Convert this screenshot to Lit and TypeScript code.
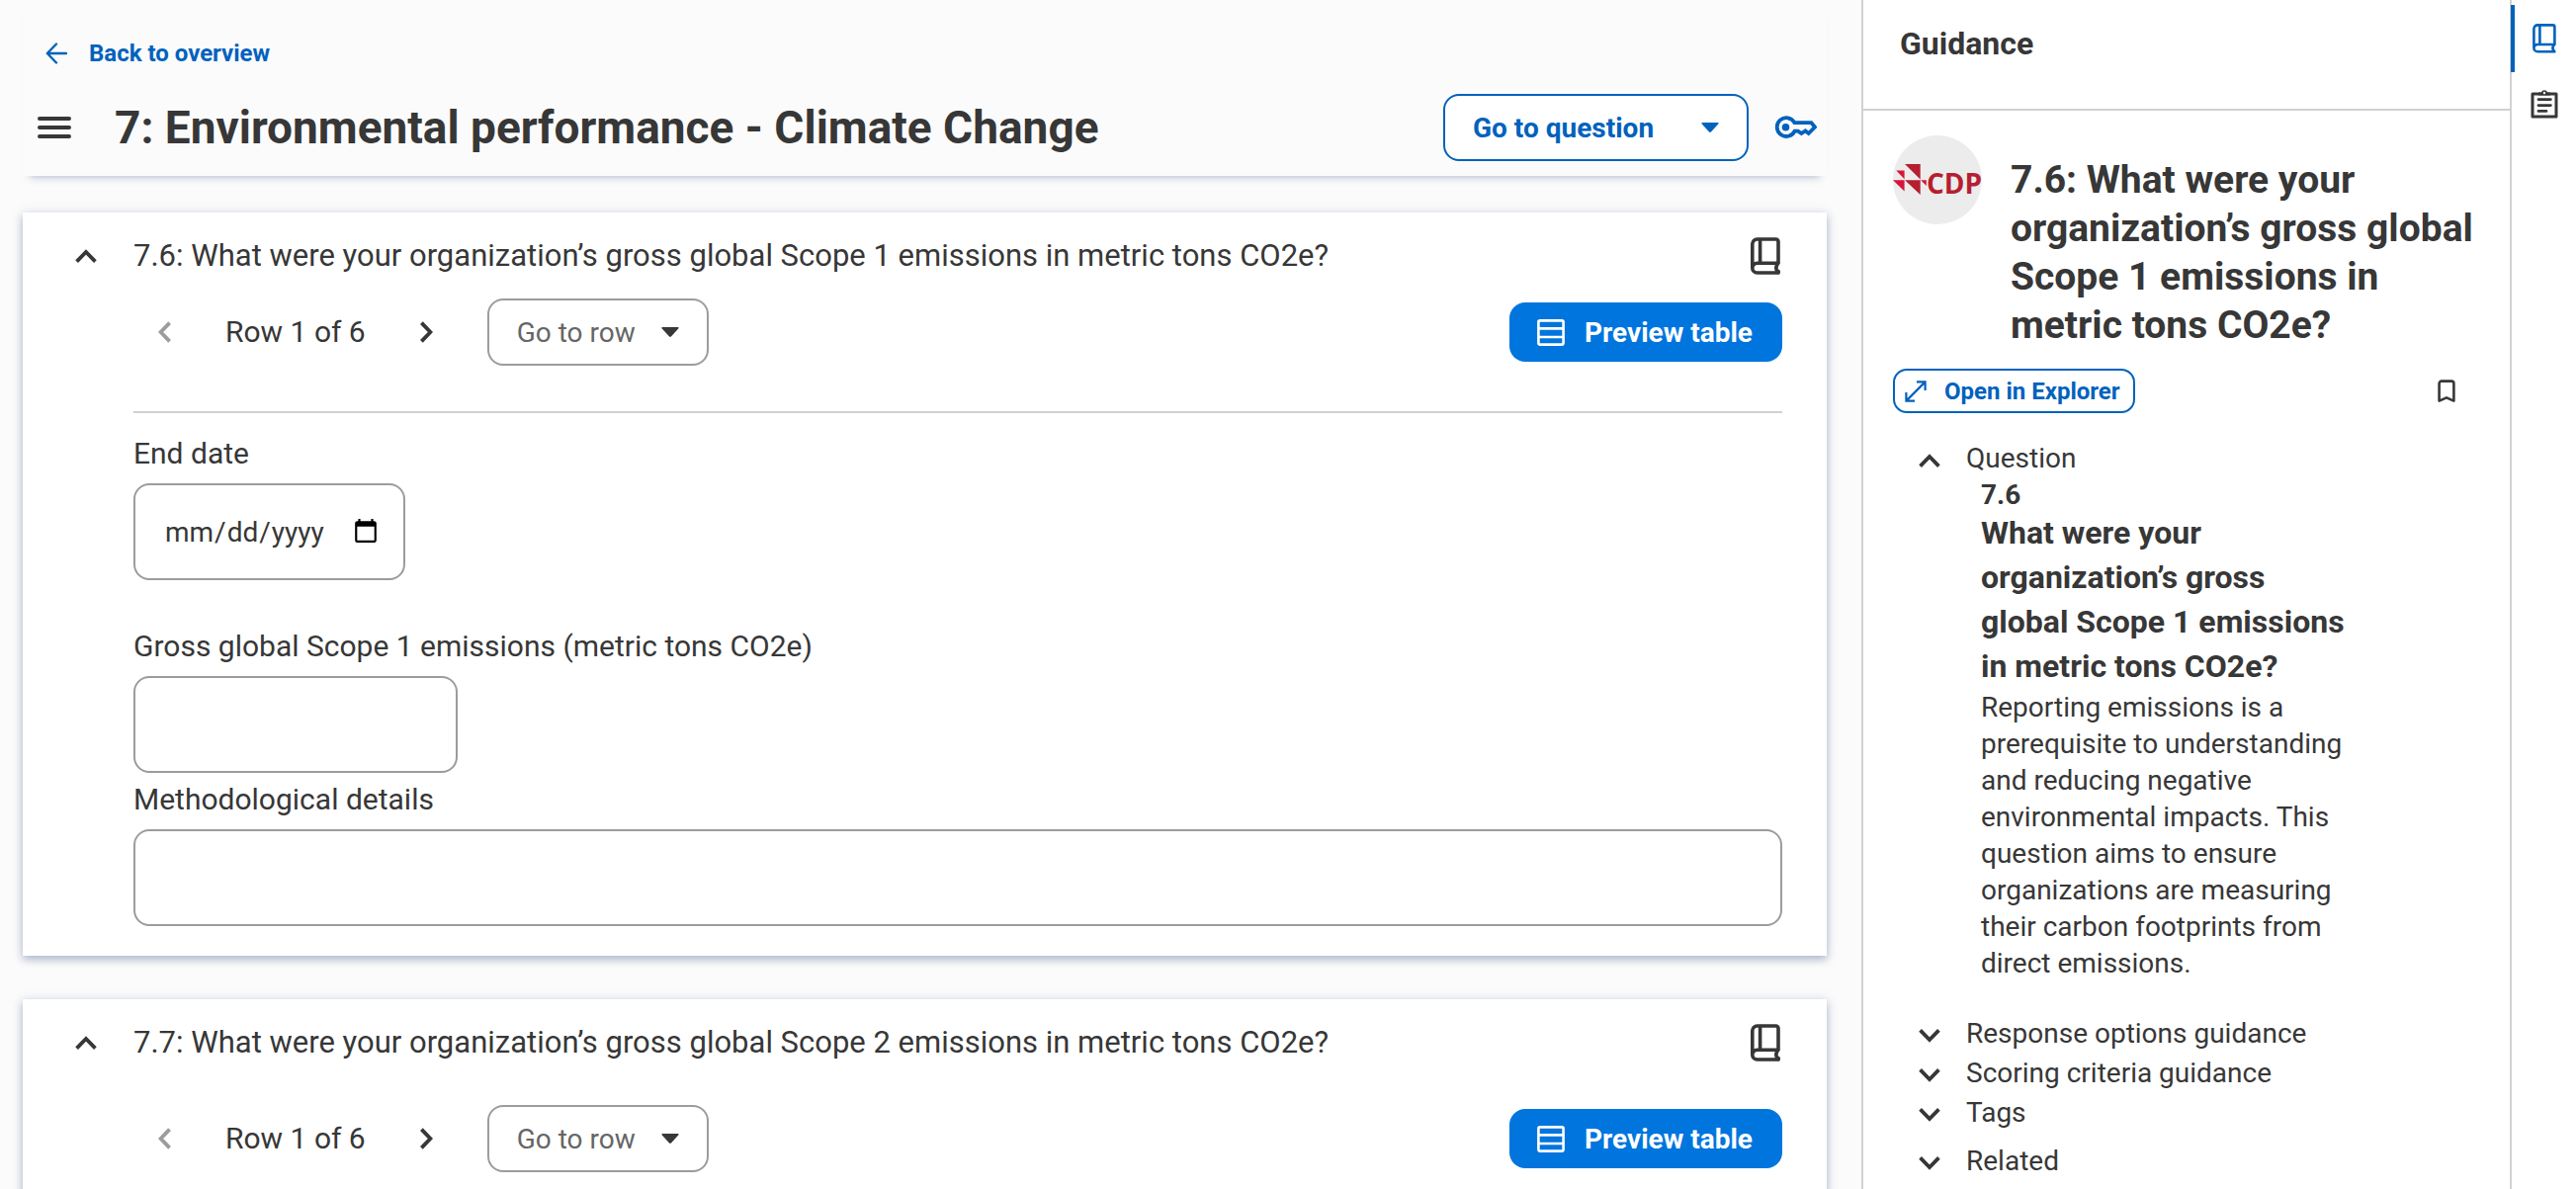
import { LitElement, html, css, svg, nothing, type TemplateResult } from "lit";
import { customElement, property } from "lit/decorators.js";

const icon = (width: number, height: number, body: TemplateResult) => html`
  <svg class="icon" width=${width} height=${height} viewBox="0 0 ${width} ${height}" aria-hidden="true"
    fill="none" stroke="currentColor" stroke-width="3" stroke-linecap="round" stroke-linejoin="round">${body}</svg>`;

const arrowLeft = () => icon(22, 22, svg`<path stroke-width="2.4" d="M21 11H2M11 1.5L1.8 11L11 20.5" />`);
const menu = () => icon(34, 24, svg`<path stroke-width="4" d="M2 3H32M2 12H32M2 21H32" />`);
const caretDown = () => icon(18, 10, svg`<path stroke="none" fill="currentColor" d="M1.5 0H16.5Q18.4 0 17.2 1.5L10.2 9.2Q9 10.4 7.8 9.2L0.8 1.5Q-.4 0 1.5 0Z" />`);
const chevronUp = () => icon(22, 14, svg`<path stroke-width="3.8" stroke-linecap="butt" stroke-linejoin="miter" d="M1.6 12.6L11 3L20.4 12.6" />`);
const chevronDown = () => icon(22, 14, svg`<path stroke-width="3.8" stroke-linecap="butt" stroke-linejoin="miter" d="M1.6 1.4L11 11L20.4 1.4" />`);
const chevronLeft = () => icon(13, 22, svg`<path stroke-width="3.8" stroke-linecap="butt" stroke-linejoin="miter" d="M11.6 1.6L2.6 11L11.6 20.4" />`);
const chevronRight = () => icon(13, 22, svg`<path stroke-width="3.8" stroke-linecap="butt" stroke-linejoin="miter" d="M1.4 1.6L10.4 11L1.4 20.4" />`);
const key = () => icon(43, 24, svg`
  <path stroke-width="3.8" stroke-linejoin="miter" stroke-linecap="butt"
    d="M20.4 7.2H37.4L41 11.6L34.6 18L31.4 15.4L27.4 18L24 15.6H20.6A9.4 9.4 0 1 1 20.4 7.2Z" />
  <circle cx="11.5" cy="11.8" r="3.8" fill="currentColor" stroke="none" />`);
const book = () => icon(30, 38, svg`
  <path stroke-width="3.6" d="M28.2 34.5V36H6.6A4.8 4.8 0 0 1 1.8 31.2V6.8A4.8 4.8 0 0 1 6.6 2H25.6A2.4 2.4 0 0 1 28 4.4V26.2H6.6A4.8 4.8 0 0 0 1.8 31M9.6 2V26M28 26.2Q23.6 31 28 36" />`);
const bookSmall = () => icon(24, 30, svg`
  <path stroke-width="2.6" d="M22.4 28.2H5.2A3.8 3.8 0 0 1 1.4 24.4V5.2A3.8 3.8 0 0 1 5.2 1.4H20.4A2 2 0 0 1 22.4 3.4V21H5.2A3.6 3.6 0 0 0 1.4 24.4M7.4 1.4V21M22.2 21Q18.6 24.6 22.2 28.2" />`);
const clipboard = () => icon(28, 30, svg`
  <path stroke-width="3" d="M2 5H26V28H2Z" />
  <path stroke-width="2.8" d="M8 10.6H20.4M8 16.6H20.4M8 22.4H16" />
  <path stroke="none" fill="currentColor" d="M8 6.4V3.6H10.8A3.4 3.4 0 0 1 17.2 3.6H20V6.4Z" />
  <circle cx="14" cy="4" r="1.2" fill="#fff" stroke="none" />`);
const table = () => icon(28, 27, svg`
  <rect x="1.4" y="1.4" width="25.2" height="24.2" rx="1.5" stroke-width="2.6" />
  <path stroke-width="2.6" stroke-linecap="butt" d="M1.4 9.4H26.6M1.4 18H26.6" />`);
const expand = () => icon(22, 22, svg`<path stroke-width="2.2" stroke-linecap="butt" stroke-linejoin="miter" d="M12 1.4H20.6V10M20.6 1.4L1.4 20.6M1.4 12V20.6H10" />`);
const bookmark = () => icon(18, 24, svg`<path stroke-width="2.6" d="M1.6 4A2.4 2.4 0 0 1 4 1.6H14A2.4 2.4 0 0 1 16.4 4V21.6L9 18.4L1.6 21.6Z" />`);

const base = css`
  :host {
    --ink: #373737;
    --link: #0062bd;
    --line: #d1d1d1;
    --field: #9c9c9c;
    box-sizing: border-box;
    color: var(--ink);
    font-family: Roboto, "Liberation Sans", sans-serif;
  }
  *, *::before, *::after { box-sizing: border-box; }
  h1, h2, h3, h4, p { margin: 0; }
  button, input, select { margin: 0; font: inherit; color: inherit; }
  button { padding: 0; border: 0; background: none; cursor: pointer; }
  .icon { display: block; flex: none; }
  .picker { display: inline-grid; align-items: center; }
  .picker select { grid-area: 1 / 1; appearance: none; height: 68px; border-radius: 16px; background: #fff; }
  .picker .icon { grid-area: 1 / 1; justify-self: end; pointer-events: none; }
`;

@customElement("question-card")
class QuestionCard extends LitElement {
  @property() heading = "";
  @property({ type: Boolean, reflect: true }) roomy = false;
  @property({ type: Boolean }) fields = false;

  static styles = [base, css`
    :host {
      display: block;
      flex: none;
      padding: 24px 45px 30px 53px;
      background: #fff;
      box-shadow: 0 4px 8px rgba(44, 72, 124, 0.32), 0 0 12px rgba(44, 72, 124, 0.12);
    }
    .head { display: flex; align-items: center; min-height: 40px; padding-right: 2px; }
    .title { flex: 1; padding-left: 37px; font-size: 31px; line-height: 40px; font-weight: 400; }
    .body { padding-left: 59px; }
    .row { display: flex; align-items: center; gap: 55px; margin-top: 23px; padding-left: 25px; }
    :host([roomy]) .row { margin-top: 43px; }
    .count { font-size: 30px; line-height: 42px; }
    .prev { color: #9c9c9c; }
    .picker select { width: 224px; padding: 0 28px; border: 2px solid var(--field); color: #666; font-size: 28px; }
    .picker .icon { margin-right: 30px; }
    .preview {
      display: flex; align-items: center; gap: 20px; height: 60px; margin-left: auto; padding: 0 30px 0 28px;
      border-radius: 16px; background: #0075de; color: #fff; font-size: 28px; font-weight: 700;
    }
    .rule { height: 2px; margin: 46px 0 20px; border: 0; background: var(--line); }
    .label { display: block; margin-bottom: 9px; font-size: 30px; line-height: 42px; }
    .field {
      display: block; height: 98px; padding: 0 22px 0 29px; border: 2px solid var(--field); border-radius: 16px;
      background: #fff; font-size: 28px;
    }
    .date { width: 275px; margin-bottom: 46px; }
    .number { width: 328px; margin-bottom: 6px; }
    .wide { width: 100%; }
  `];

  render() {
    return html`
      <div class="head">
        <button aria-label="Collapse question">${chevronUp()}</button>
        <h2 class="title">${this.heading}</h2>
        <button aria-label="Show guidance">${book()}</button>
      </div>
      <div class="body">
        <div class="row">
          <button class="prev" aria-label="Previous row" disabled>${chevronLeft()}</button>
          <span class="count">Row 1 of 6</span>
          <button aria-label="Next row">${chevronRight()}</button>
          <span class="picker">
            <select aria-label="Go to row"><option>Go to row</option></select>
            ${caretDown()}
          </span>
          <button class="preview">${table()}Preview table</button>
        </div>
        ${this.fields ? html`
          <hr class="rule" />
          <label class="label" for="end-date">End date</label>
          <input class="field date" id="end-date" type="date" />
          <label class="label" for="gross">Gross global Scope 1 emissions (metric tons CO2e)</label>
          <input class="field number" id="gross" type="text" inputmode="decimal" />
          <label class="label" for="details">Methodological details</label>
          <input class="field wide" id="details" type="text" />` : nothing}
      </div>`;
  }
}

@customElement("guidance-panel")
class GuidancePanel extends LitElement {
  static styles = [base, css`
    :host { display: block; border-left: 2px solid var(--line); background: #fff; overflow: hidden; }
    .top { padding: 22px 37px 44px; border-bottom: 2px solid var(--line); }
    .name { font-size: 32px; line-height: 44px; }
    .content { padding: 25px 34px 25px 30px; }
    .intro { display: flex; gap: 29px; }
    .logo { flex: none; border-radius: 50%; background: #ececec; }
    .mark { font-family: "Open Sans", "Noto Sans", sans-serif; font-size: 28px; font-weight: 700; }
    .question { margin-top: 21px; font-size: 39px; line-height: 49px; }
    .actions { display: flex; align-items: center; justify-content: space-between; margin-top: 19px; padding-right: 21px; }
    .open {
      display: flex; align-items: center; gap: 18px; height: 45px; padding: 0 13px 0 10px;
      border: 2px solid var(--link); border-radius: 14px; color: var(--link); font-size: 24px; font-weight: 700;
    }
    .sections { display: flex; flex-direction: column; align-items: flex-start; margin-top: 26px; padding-left: 26px; }
    .toggle { display: flex; align-items: center; gap: 26px; font-size: 28px; line-height: 40px; }
    .toggle .icon { margin-top: 4px; }
    .text { max-width: 443px; margin-bottom: 33px; padding-left: 63px; font-size: 28px; line-height: 37px; }
    .number { line-height: 33px; font-size: 28px; }
    .lead { font-size: 32px; line-height: 45px; }
    .last { margin-top: 9px; }
  `];

  render() {
    return html`
      <div class="top"><h2 class="name">Guidance</h2></div>
      <div class="content">
        <div class="intro">
          <svg class="logo" width="90" height="90" viewBox="0 0 90 90" role="img" aria-label="CDP">
            <path fill="#b51f30" d="M12 29H27.7V44.4ZM12 45.2H27.7V60Z" />
            <path fill="#d8143c" d="M3.3 35.5H11.6V44.2ZM0 45.2H11.6V56.6ZM28.2 45.2H33.8V51Z" />
            <text class="mark" x="34" y="59" fill="#b51f30">CDP</text>
          </svg>
          <h3 class="question">7.6: What were your organization’s gross global Scope 1 emissions in metric tons CO2e?</h3>
        </div>
        <div class="actions">
          <button class="open">${expand()}Open in Explorer</button>
          <button aria-label="Bookmark">${bookmark()}</button>
        </div>
        <div class="sections">
          <button class="toggle" aria-expanded="true">${chevronUp()}Question</button>
          <div class="text">
            <h4 class="number">7.6</h4>
            <h4 class="lead">What were your organization’s gross global Scope 1 emissions in metric tons CO2e?</h4>
            <p>Reporting emissions is a prerequisite to understanding and reducing negative environmental impacts. This question aims to ensure organizations are measuring their carbon footprints from direct emissions.</p>
          </div>
          <button class="toggle" aria-expanded="false">${chevronDown()}Response options guidance</button>
          <button class="toggle" aria-expanded="false">${chevronDown()}Scoring criteria guidance</button>
          <button class="toggle" aria-expanded="false">${chevronDown()}Tags</button>
          <button class="toggle last" aria-expanded="false">${chevronDown()}Related</button>
        </div>
      </div>`;
  }
}

@customElement("app-root")
class AppRoot extends LitElement {
  static styles = [base, css`
    :host { display: grid; grid-template-columns: minmax(0, 1fr) 656px 67px; height: 100vh; background: #fbfbfb; overflow: hidden; }
    .main { display: flex; flex-direction: column; gap: 44px; min-width: 0; padding: 0 35px 0 23px; overflow: hidden; }
    .header { flex: none; margin-bottom: -7px; padding: 38px 10px 15px 15px; box-shadow: 0 8px 8px -7px rgba(44, 72, 124, 0.36); }
    .back {
      display: inline-flex; align-items: center; gap: 22px; margin-left: 8px; color: var(--link);
      font-size: 24px; font-weight: 700; line-height: 32px; text-decoration: none;
    }
    .bar { display: flex; align-items: center; margin-top: 25px; }
    .title { flex: 1; padding-left: 44px; font-size: 46px; line-height: 60px; }
    .picker select { width: 309px; padding: 0 28px; border: 2px solid var(--link); color: var(--link); font-size: 28px; font-weight: 700; }
    .picker .icon { margin-right: 30px; }
    .picker, .key { color: var(--link); }
    .key { margin-left: 26px; }
    .rail { display: flex; flex-direction: column; padding-top: 5px; border-left: 2px solid var(--line); background: #fff; }
    .tab { display: grid; place-items: center; height: 64px; }
    .tab.active { height: 68px; padding-right: 2px; margin-left: -1px; border-left: 4px solid var(--link); color: var(--link); }
  `];

  render() {
    return html`
      <main class="main">
        <header class="header">
          <a class="back" href="#overview">${arrowLeft()}Back to overview</a>
          <div class="bar">
            <button aria-label="Menu">${menu()}</button>
            <h1 class="title">7: Environmental performance - Climate Change</h1>
            <span class="picker">
              <select aria-label="Go to question"><option>Go to question</option></select>
              ${caretDown()}
            </span>
            <button class="key" aria-label="Key">${key()}</button>
          </div>
        </header>
        <question-card fields heading="7.6: What were your organization’s gross global Scope 1 emissions in metric tons CO2e?"></question-card>
        <question-card roomy heading="7.7: What were your organization’s gross global Scope 2 emissions in metric tons CO2e?"></question-card>
      </main>
      <guidance-panel></guidance-panel>
      <nav class="rail" aria-label="Side panels">
        <button class="tab active" aria-label="Guidance">${bookSmall()}</button>
        <button class="tab" aria-label="Notes">${clipboard()}</button>
      </nav>`;
  }
}
